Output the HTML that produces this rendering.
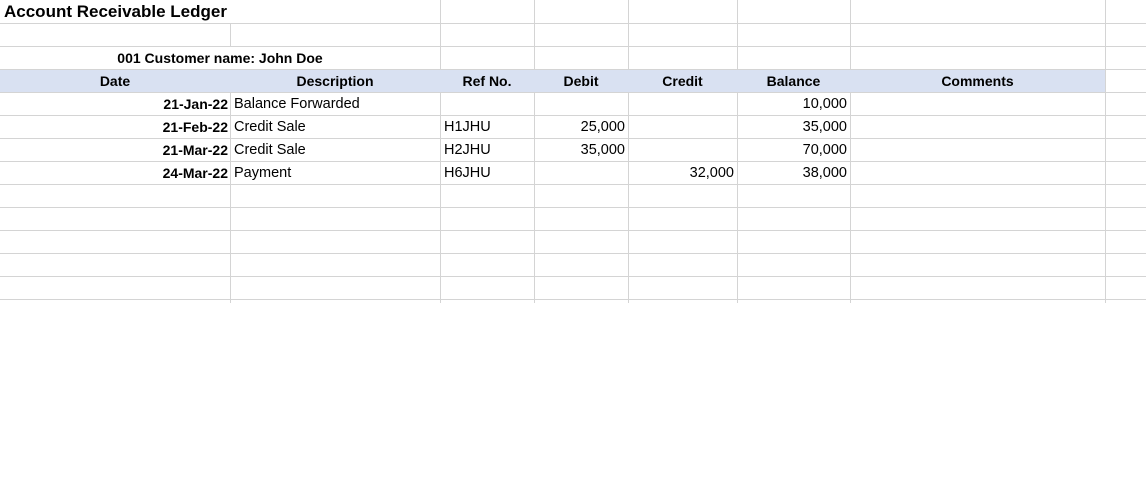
<!DOCTYPE html><html><head><style>
body{margin:0;width:1146px;height:480px;background:#fff;position:relative;overflow:hidden;font-family:"Liberation Sans",Arial,sans-serif;color:#000}
.h{position:absolute;left:0;width:1146px;height:1px;background:#d4d4d4}
.v{position:absolute;width:1px;background:#d4d4d4}
.t{position:absolute;font-size:14.5px;line-height:23px;white-space:nowrap}
.b{font-weight:bold;font-size:14px}
.r{text-align:right}.c{text-align:center}
</style></head><body>
<div class="h" style="top:23px"></div><div class="h" style="top:46px"></div><div class="h" style="top:69px"></div>
<div class="h" style="top:92px"></div><div class="h" style="top:115px"></div><div class="h" style="top:138px"></div>
<div class="h" style="top:161px"></div><div class="h" style="top:184px"></div><div class="h" style="top:207px"></div>
<div class="h" style="top:230px"></div><div class="h" style="top:253px"></div><div class="h" style="top:276px"></div>
<div class="h" style="top:299px"></div>
<div class="v" style="left:230px;top:23px;height:23px"></div>
<div class="v" style="left:230px;top:92px;height:211px"></div>
<div class="v" style="left:440px;top:0;height:303px"></div>
<div class="v" style="left:534px;top:0;height:303px"></div>
<div class="v" style="left:628px;top:0;height:303px"></div>
<div class="v" style="left:737px;top:0;height:303px"></div>
<div class="v" style="left:850px;top:0;height:303px"></div>
<div class="v" style="left:1105px;top:0;height:303px"></div>
<div style="position:absolute;left:0;top:47px;width:440px;height:22px;background:#fff"></div>
<div style="position:absolute;left:0;top:70px;width:1105px;height:22px;background:#d9e1f2"></div>
<div class="t b" style="left:4px;top:0;font-size:17px">Account Receivable Ledger</div>
<div class="t b c" style="left:0;width:440px;top:47px">001 Customer name: John Doe</div>
<div class="t b c" style="left:0;width:230px;top:70px">Date</div>
<div class="t b c" style="left:230px;width:210px;top:70px">Description</div>
<div class="t b c" style="left:440px;width:94px;top:70px">Ref No.</div>
<div class="t b c" style="left:534px;width:94px;top:70px">Debit</div>
<div class="t b c" style="left:628px;width:109px;top:70px">Credit</div>
<div class="t b c" style="left:737px;width:113px;top:70px">Balance</div>
<div class="t b c" style="left:850px;width:255px;top:70px">Comments</div>

<div class="t b r" style="left:0;width:228px;top:93px">21-Jan-22</div>
<div class="t" style="left:234px;top:93px">Balance Forwarded</div>
<div class="t r" style="left:737px;width:110px;top:93px">10,000</div>

<div class="t b r" style="left:0;width:228px;top:116px">21-Feb-22</div>
<div class="t" style="left:234px;top:116px">Credit Sale</div>
<div class="t" style="left:444px;top:116px">H1JHU</div>
<div class="t r" style="left:534px;width:91px;top:116px">25,000</div>
<div class="t r" style="left:737px;width:110px;top:116px">35,000</div>

<div class="t b r" style="left:0;width:228px;top:139px">21-Mar-22</div>
<div class="t" style="left:234px;top:139px">Credit Sale</div>
<div class="t" style="left:444px;top:139px">H2JHU</div>
<div class="t r" style="left:534px;width:91px;top:139px">35,000</div>
<div class="t r" style="left:737px;width:110px;top:139px">70,000</div>

<div class="t b r" style="left:0;width:228px;top:162px">24-Mar-22</div>
<div class="t" style="left:234px;top:162px">Payment</div>
<div class="t" style="left:444px;top:162px">H6JHU</div>
<div class="t r" style="left:628px;width:106px;top:162px">32,000</div>
<div class="t r" style="left:737px;width:110px;top:162px">38,000</div>
</body></html>
